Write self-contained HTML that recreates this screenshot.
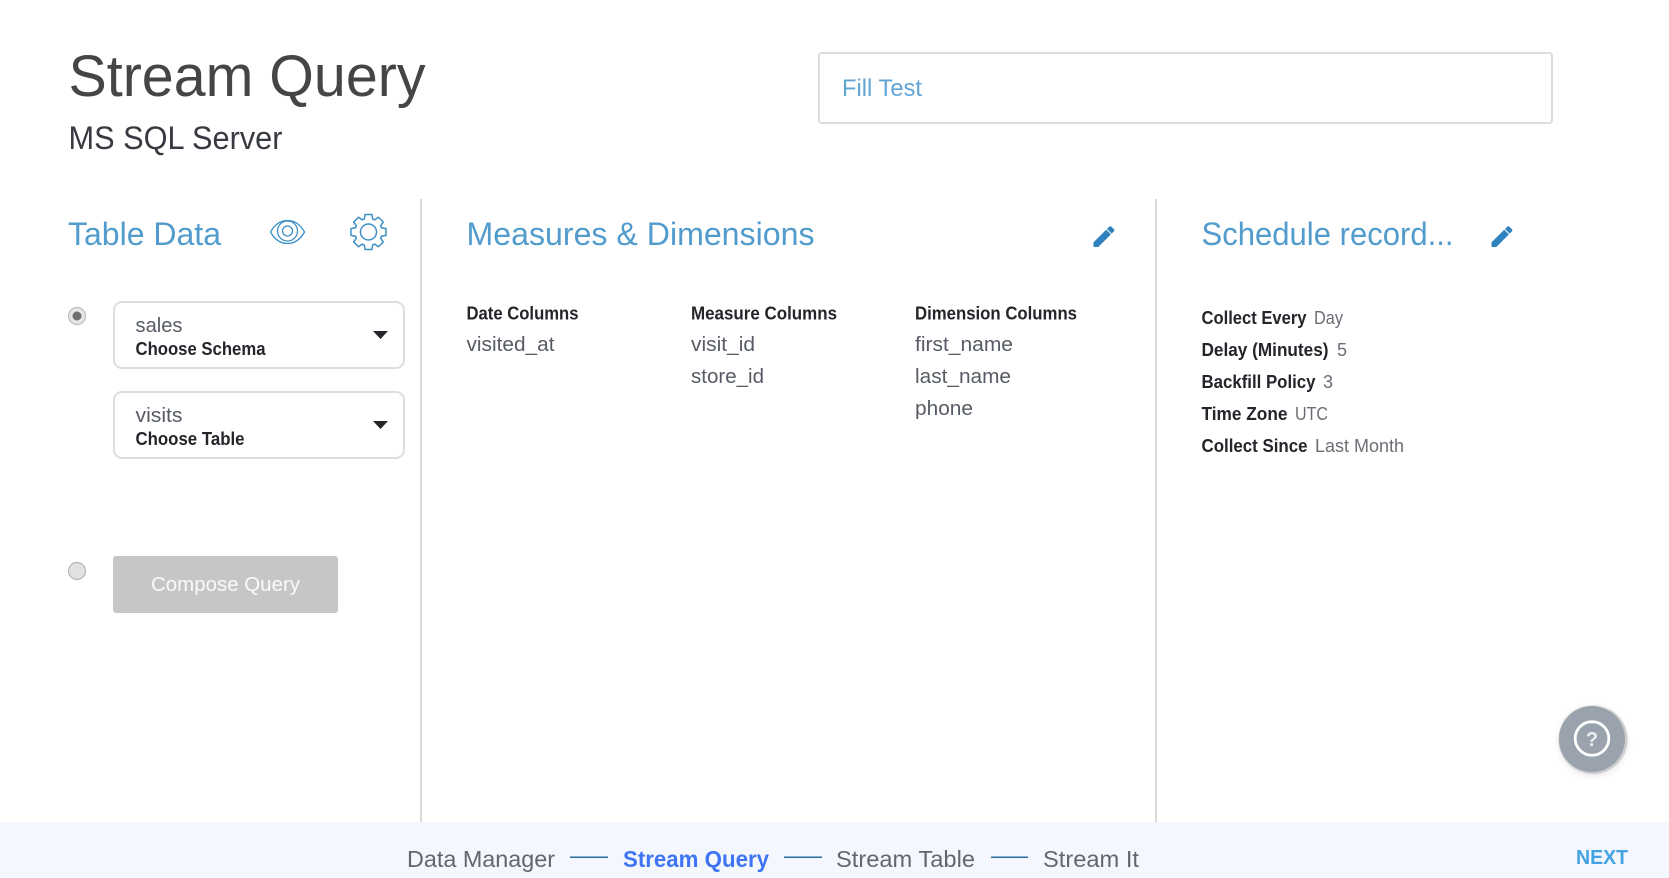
<!DOCTYPE html>
<html lang="en">
<head>
<meta charset="utf-8">
<title>Stream Query</title>
<style>
html,body{margin:0;padding:0;background:#fff;width:1669px;height:878px;overflow:hidden}
svg{display:block}
text{font-family:"Liberation Sans",sans-serif;white-space:pre}
.b{font-weight:700;fill:#24252a;font-size:18px}
.v{fill:#565b64;font-size:20.5px}
.s{fill:#6a6e75;font-size:18px}
.h{fill:#519ccd;font-size:32px}
.f{fill:#62666e;font-size:23.5px}
</style>
</head>
<body>
<svg width="1669" height="878" viewBox="0 0 1669 878" xmlns="http://www.w3.org/2000/svg">
<rect width="1669" height="878" fill="#fff"/>

<!-- header -->
<text x="68.500" y="96" font-size="58" fill="#454545" textLength="357" lengthAdjust="spacingAndGlyphs">Stream Query</text>
<text x="68.500" y="149" font-size="32" fill="#383a41" textLength="214" lengthAdjust="spacingAndGlyphs">MS SQL Server</text>
<rect x="819" y="53" width="733" height="70" rx="3" fill="#fff" stroke="#dcdcdc" stroke-width="2"/>
<text x="842" y="96" font-size="24" fill="#62a6d4" textLength="80" lengthAdjust="spacingAndGlyphs">Fill Test</text>

<!-- dividers -->
<rect x="420" y="199" width="2" height="623" fill="#d8d8d8"/>
<rect x="1155" y="199" width="2" height="623" fill="#d8d8d8"/>

<!-- table data -->
<text class="h" x="68" y="245" textLength="153" lengthAdjust="spacingAndGlyphs">Table Data</text>
<g fill="none" stroke="#3f90c6" stroke-width="1.3">
<path d="M270.500 232C275 224 281 220.500 287.500 220.500C294 220.500 300 224 304.500 232C300 240 294 243.500 287.500 243.500C281 243.500 275 240 270.500 232Z"/>
<circle cx="287.500" cy="231" r="10"/>
<circle cx="287.500" cy="231" r="5"/>
</g>
<g transform="translate(368.500 232)" fill="none" stroke="#3f90c6" stroke-width="1.500">
<path d="M-4.200 -13L-3.400 -17.500L3.400 -17.500L4.200 -13L6.220 -12.160L9.970 -14.780L14.780 -9.970L12.160 -6.220L13 -4.200L17.500 -3.400L17.500 3.400L13 4.200L12.160 6.220L14.780 9.970L9.970 14.780L6.220 12.160L4.200 13L3.400 17.500L-3.400 17.500L-4.200 13L-6.220 12.160L-9.970 14.780L-14.780 9.970L-12.160 6.220L-13 4.200L-17.500 3.400L-17.500 -3.400L-13 -4.200L-12.160 -6.220L-14.780 -9.970L-9.970 -14.780L-6.220 -12.160Z"/>
<circle r="8"/>
</g>

<!-- radios -->
<circle cx="77" cy="316" r="8.500" fill="#e6e6e6" stroke="#bdbdbd" stroke-width="1.200"/>
<circle cx="77" cy="316" r="4.500" fill="#707070"/>
<circle cx="77" cy="571" r="8.500" fill="#e2e2e2" stroke="#b5b5b5" stroke-width="1.200"/>

<!-- selects -->
<rect x="114" y="302" width="290" height="66" rx="8" fill="#fff" stroke="#dedede" stroke-width="2"/>
<text x="135.500" y="332" font-size="20.500" fill="#565b64" textLength="47" lengthAdjust="spacingAndGlyphs">sales</text>
<text class="b" x="135.500" y="355" textLength="130" lengthAdjust="spacingAndGlyphs">Choose Schema</text>
<path d="M373 331H388L380.500 339Z" fill="#26262a"/>

<rect x="114" y="392" width="290" height="66" rx="8" fill="#fff" stroke="#dedede" stroke-width="2"/>
<text x="135.500" y="422" font-size="20.500" fill="#565b64" textLength="47" lengthAdjust="spacingAndGlyphs">visits</text>
<text class="b" x="135.500" y="445" textLength="109" lengthAdjust="spacingAndGlyphs">Choose Table</text>
<path d="M373 421H388L380.500 429Z" fill="#26262a"/>

<!-- button -->
<rect x="113" y="556" width="225" height="57" rx="3" fill="#c6c6c6"/>
<text x="151" y="591" font-size="20.500" fill="#fafafa" textLength="149" lengthAdjust="spacingAndGlyphs">Compose Query</text>

<!-- measures -->
<text class="h" x="466.500" y="245" textLength="348" lengthAdjust="spacingAndGlyphs">Measures &amp; Dimensions</text>
<path transform="translate(1090.500 223.200) scale(1.120)" fill="#2f82bd" stroke="#2f82bd" stroke-width=".6" stroke-linejoin="round" d="M3 17.250V21h3.750L17.810 9.940l-3.750-3.750L3 17.250zM20.710 7.040c.39-.39.39-1.020 0-1.410l-2.340-2.340c-.39-.39-1.020-.39-1.410 0l-1.830 1.830 3.750 3.750 1.830-1.830z"/>

<text class="b" x="466.500" y="319.500" textLength="112" lengthAdjust="spacingAndGlyphs">Date Columns</text>
<text class="b" x="691" y="319.500" textLength="146" lengthAdjust="spacingAndGlyphs">Measure Columns</text>
<text class="b" x="915" y="319.500" textLength="162" lengthAdjust="spacingAndGlyphs">Dimension Columns</text>
<text class="v" x="466.500" y="351" textLength="88" lengthAdjust="spacingAndGlyphs">visited_at</text>
<text class="v" x="691" y="351" textLength="64" lengthAdjust="spacingAndGlyphs">visit_id</text>
<text class="v" x="691" y="383" textLength="73" lengthAdjust="spacingAndGlyphs">store_id</text>
<text class="v" x="915" y="351" textLength="98" lengthAdjust="spacingAndGlyphs">first_name</text>
<text class="v" x="915" y="383" textLength="96" lengthAdjust="spacingAndGlyphs">last_name</text>
<text class="v" x="915" y="415" textLength="58" lengthAdjust="spacingAndGlyphs">phone</text>

<!-- schedule -->
<text class="h" x="1201.500" y="245" textLength="252" lengthAdjust="spacingAndGlyphs">Schedule record...</text>
<path transform="translate(1488.500 223.200) scale(1.120)" fill="#2f82bd" stroke="#2f82bd" stroke-width=".6" stroke-linejoin="round" d="M3 17.250V21h3.750L17.810 9.940l-3.750-3.750L3 17.250zM20.710 7.040c.39-.39.39-1.020 0-1.410l-2.340-2.340c-.39-.39-1.020-.39-1.410 0l-1.830 1.830 3.750 3.750 1.830-1.830z"/>

<text class="b" x="1201.500" y="324" textLength="105" lengthAdjust="spacingAndGlyphs">Collect Every</text>
<text class="s" x="1314" y="324" textLength="29" lengthAdjust="spacingAndGlyphs">Day</text>
<text class="b" x="1201.500" y="356" textLength="127" lengthAdjust="spacingAndGlyphs">Delay (Minutes)</text>
<text class="s" x="1337" y="356">5</text>
<text class="b" x="1201.500" y="388" textLength="114" lengthAdjust="spacingAndGlyphs">Backfill Policy</text>
<text class="s" x="1323" y="388">3</text>
<text class="b" x="1201.500" y="420" textLength="86" lengthAdjust="spacingAndGlyphs">Time Zone</text>
<text class="s" x="1295" y="420" textLength="33" lengthAdjust="spacingAndGlyphs">UTC</text>
<text class="b" x="1201.500" y="452" textLength="106" lengthAdjust="spacingAndGlyphs">Collect Since</text>
<text class="s" x="1315" y="452" textLength="89" lengthAdjust="spacingAndGlyphs">Last Month</text>

<!-- help -->
<defs><filter id="sh" x="-30%" y="-30%" width="160%" height="160%"><feGaussianBlur stdDeviation="4"/></filter></defs>
<circle cx="1593" cy="742" r="33" fill="#000" opacity=".12" filter="url(#sh)"/>
<circle cx="1593" cy="739.500" r="34.500" fill="#cdcdcd"/>
<path d="M1562 722A34.500 34.500 0 0 1 1610 710L1605 716L1568 728Z" fill="#ececec"/>
<circle cx="1592" cy="739" r="33" fill="#9aa3ad"/>
<circle cx="1592" cy="738.500" r="16.800" fill="none" stroke="#fff" stroke-width="2.800"/>
<text x="1592" y="746" text-anchor="middle" font-size="20" font-weight="700" fill="#eceef0">?</text>

<!-- footer -->
<rect x="0" y="822" width="1669" height="56" fill="#f4f7fe"/>
<text class="f" x="407" y="867" textLength="148" lengthAdjust="spacingAndGlyphs">Data Manager</text>
<rect x="570" y="856.500" width="38" height="1.500" fill="#2c6c9c"/>
<text x="623" y="867" font-size="23.500" font-weight="700" fill="#3f75f2" textLength="146" lengthAdjust="spacingAndGlyphs">Stream Query</text>
<rect x="784" y="856.500" width="38" height="1.500" fill="#2c6c9c"/>
<text class="f" x="836" y="867" textLength="139" lengthAdjust="spacingAndGlyphs">Stream Table</text>
<rect x="991" y="856.500" width="37" height="1.500" fill="#2c6c9c"/>
<text class="f" x="1043" y="867" textLength="96" lengthAdjust="spacingAndGlyphs">Stream It</text>
<text x="1576" y="864" font-size="20.500" font-weight="700" fill="#42a2e2" textLength="52" lengthAdjust="spacingAndGlyphs">NEXT</text>
</svg>
</body>
</html>
